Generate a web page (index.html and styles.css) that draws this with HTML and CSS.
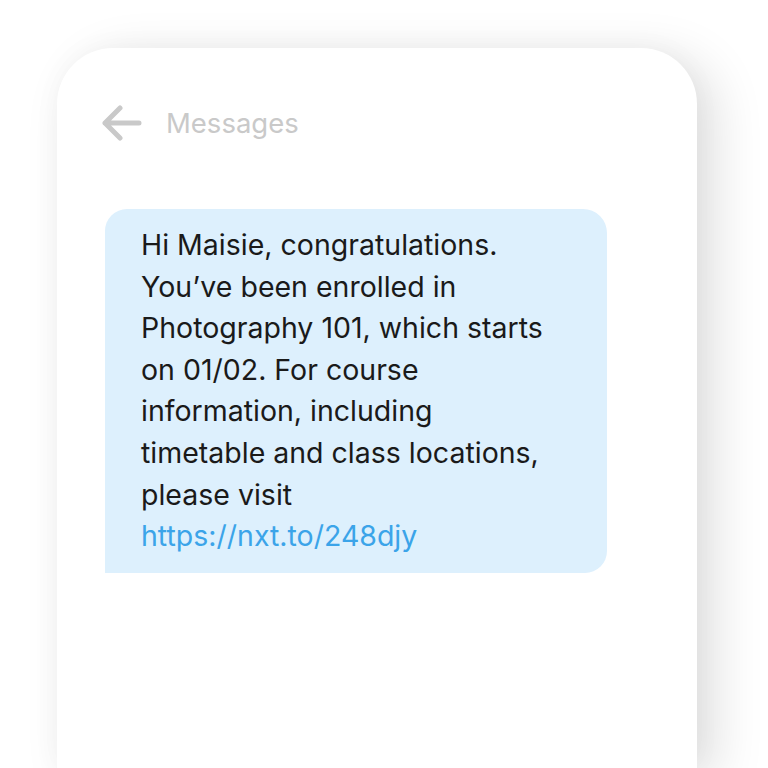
FILE: index.html
```html
<!DOCTYPE html>
<html lang="en">
<head>
<meta charset="utf-8">
<title>Messages</title>
<link rel="stylesheet" href="styles.css">
</head>
<body>
<div class="phone">
  <header class="header">
    <svg class="back" width="40" height="36" viewBox="0 0 40 36" aria-hidden="true">
      <path d="M18 3 L3 18 L18 33 M3 18 H37" fill="none" stroke="#c9c9c9" stroke-width="5" stroke-linecap="round" stroke-linejoin="round"/>
    </svg>
    <span class="title">Messages</span>
  </header>
  <div class="bubble">
    <p class="msg">Hi Maisie, congratulations.<br>You’ve been enrolled in<br>Photography 101, which starts<br>on 01/02. For course<br>information, including<br>timetable and class locations,<br>please visit<br><span class="link">https://nxt.to/248djy</span></p>
  </div>
</div>
</body>
</html>
```
FILE: styles.css
```css
html, body {
  margin: 0;
  padding: 0;
  background: #ffffff;
  overflow: hidden;
  height: 768px;
}
body {
  font-family: Inter, "Liberation Sans", sans-serif;
}
.phone {
  margin: 48px 0 0 57px;
  width: 640px;
  height: 720px;
  background: #ffffff;
  border-radius: 56px 56px 0 0;
  box-shadow: 18px 10px 50px rgba(0, 0, 0, 0.13), 0 0 30px rgba(0, 0, 0, 0.03);
  padding: 57px 0 0 0;
  box-sizing: border-box;
}
.header {
  display: flex;
  align-items: center;
  gap: 24px;
  padding-left: 45px;
  height: 36px;
}
.back {
  display: block;
}
.title {
  font-size: 27.5px;
  color: #c9c9c9;
}
.bubble {
  margin: 68px 0 0 48px;
  width: 502px;
  background: #ddf0fd;
  border-radius: 22px 24px 22px 0;
  padding: 15px 20px 16px 36px;
  box-sizing: border-box;
}
.msg {
  margin: 0;
  font-size: 28.5px;
  line-height: 41.6px;
  color: #1a1a1a;
}
.link {
  color: #3ba4e9;
}
```
